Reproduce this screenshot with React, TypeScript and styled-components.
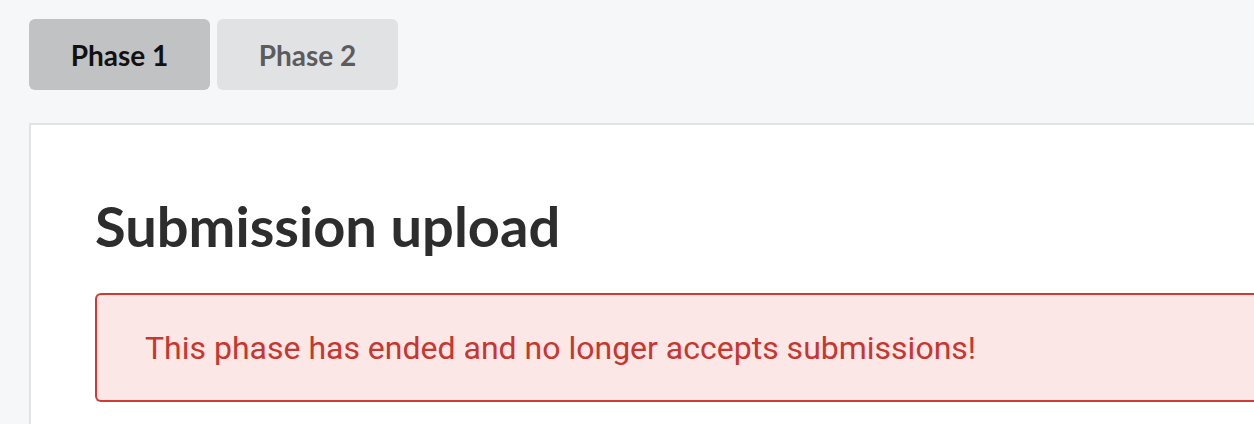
import styled, { createGlobalStyle } from 'styled-components';

const GlobalStyle = createGlobalStyle`
	html, body {
		margin: 0;
		padding: 0;
		background: #f6f7f9;
		overflow: hidden;
	}
`;

const Page = styled.div`
	padding: 19px 0 0 29px;
	height: 424px;
	box-sizing: border-box;
	overflow: hidden;
	font-family: Lato, 'Noto Sans', sans-serif;
`;

const TabBar = styled.nav`
	display: flex;
	gap: 7px;
`;

const Tab = styled.button<{ $active?: boolean }>`
	width: 181px;
	height: 71px;
	border: none;
	border-radius: 6px;
	font-family: Lato, sans-serif;
	font-weight: 700;
	font-size: 28px;
	cursor: pointer;
	background: ${(p) => (p.$active ? '#c1c2c4' : '#e1e2e4')};
	color: ${(p) => (p.$active ? '#111111' : '#5c5c5c')};
`;

const Card = styled.section`
	margin-top: 33px;
	margin-right: -40px;
	background: #ffffff;
	border: 2px solid #e2e3e5;
	border-right: none;
	padding: 66px 0 0 64px;
	height: 400px;
`;

const Heading = styled.h1`
	margin: 0 0 32px;
	font-family: Lato, sans-serif;
	font-weight: 700;
	font-size: 56px;
	line-height: 70px;
	color: #2d2d2d;
`;

const Alert = styled.div`
	border: 2px solid #cf3a34;
	border-right: none;
	border-radius: 6px 0 0 6px;
	background: #fae7e6;
	height: 109px;
	box-sizing: border-box;
	display: flex;
	align-items: center;
	padding-left: 48px;
	font-family: Roboto, 'Liberation Sans', sans-serif;
	font-size: 32px;
	color: #c9352f;
`;

export default function App() {
	return (
		<>
			<GlobalStyle />
			<Page>
				<TabBar>
					<Tab $active>Phase 1</Tab>
					<Tab>Phase 2</Tab>
				</TabBar>
				<Card>
					<Heading>Submission upload</Heading>
					<Alert>This phase has ended and no longer accepts submissions!</Alert>
				</Card>
			</Page>
		</>
	);
}
